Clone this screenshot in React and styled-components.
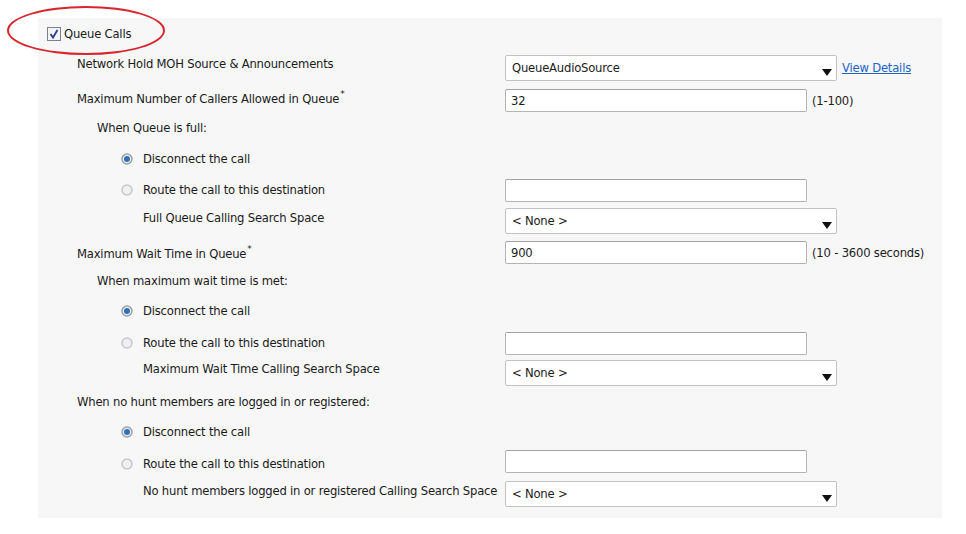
import React from 'react';
import styled, { createGlobalStyle } from 'styled-components';

const GlobalStyle = createGlobalStyle`
  html, body {
    margin: 0;
    padding: 0;
    background: #ffffff;
  }
  body {
    font-family: "DejaVu Sans", Verdana, sans-serif;
    font-size: 11.6px;
    color: #1a1a1a;
  }
`;

const Page = styled.div`
  position: relative;
  width: 966px;
  height: 534px;
  padding: 18px 24px 0 38px;
  box-sizing: border-box;
`;

const Panel = styled.div`
  background: #f7f7f7;
  width: 904px;
  padding-bottom: 12px;
  display: flex;
  flex-direction: column;
`;

const Row = styled.div`
  display: flex;
  align-items: center;
  height: ${p => p.h}px;
`;

const Label = styled.div`
  width: 467px;
  flex-shrink: 0;
  box-sizing: border-box;
  padding-left: ${p => p.indent}px;
  display: flex;
  align-items: center;
  gap: ${p => p.gap ?? 10}px;
  white-space: nowrap;
  margin-bottom: ${p => p.up || 0}px;
  letter-spacing: -0.2px;
`;

const Star = styled.sup`
  font-size: 9px;
  margin-left: 1px;
  position: relative;
  top: -1px;
`;

const Control = styled.div`
  display: flex;
  align-items: center;
  gap: 5px;
  margin-top: ${p => p.down || 0}px;
`;

const TextBox = styled.div`
  width: 302px;
  height: 23px;
  box-sizing: border-box;
  background: #fff;
  border: 1px solid #b4b4b4;
  border-top-color: #a3a3a3;
  border-radius: 2px;
  padding: 0 5px;
  display: flex;
  align-items: center;
  letter-spacing: -0.2px;
`;

const SelectBox = styled.div`
  width: 332px;
  height: 26px;
  box-sizing: border-box;
  background: #fff;
  border: 1px solid #c2c2c2;
  border-radius: 2px;
  padding: 0 4px 0 6px;
  display: flex;
  align-items: center;
  justify-content: space-between;
  letter-spacing: -0.2px;
`;

const Arrow = styled.span`
  align-self: flex-end;
  margin-bottom: 4px;
  width: 0;
  height: 0;
  border-left: 5px solid transparent;
  border-right: 5px solid transparent;
  border-top: 7px solid #111;
`;

const Hint = styled.span`
  letter-spacing: -0.2px;
`;

const Link = styled.a`
  color: #1f63c6;
  text-decoration: underline;
  letter-spacing: -0.2px;
`;

const Ellipse = styled.div`
  position: absolute;
  left: 7px;
  top: 6px;
  width: 158px;
  height: 49px;
  border: 2.5px solid #d7262e;
  border-radius: 50%;
  box-sizing: border-box;
`;

const Check = () => (
  <svg width="14" height="14" viewBox="0 0 14 14">
    <rect x="0.5" y="0.5" width="13" height="13" fill="#f4f4f6" stroke="#7c8189" />
    <path d="M3.5 7 L6 10.5 L10.5 3" fill="none" stroke="#2a3f8f" strokeWidth="1.8" />
  </svg>
);

const Radio = ({ on }) => (
  <svg width="12" height="12" viewBox="0 0 12 12">
    <circle cx="6" cy="6" r="5" fill="#f0f0f0" stroke={on ? '#97a0aa' : '#c4c7cb'} strokeWidth="1.5" />
    {on && <circle cx="6" cy="6" r="3" fill="#2f6fb6" />}
  </svg>
);

const Select = ({ value }) => (
  <SelectBox>
    <span>{value}</span>
    <Arrow />
  </SelectBox>
);

const Choice = ({ on, text, up }) => (
  <Label indent={83} up={up}>
    <Radio on={on} />
    <span>{text}</span>
  </Label>
);

export default function App() {
  return (
    <Page>
      <GlobalStyle />
      <Panel>
        <Row h={32}>
          <Label indent={9} gap={3}>
            <Check />
            <span>Queue Calls</span>
          </Label>
        </Row>
        <Row h={32}>
          <Label indent={39} up={4}>Network Hold MOH Source &amp; Announcements</Label>
          <Control down={4}>
            <Select value="QueueAudioSource" />
            <Link href="#">View Details</Link>
          </Control>
        </Row>
        <Row h={34}>
          <Label indent={39} up={3}>
            <span>Maximum Number of Callers Allowed in Queue<Star>*</Star></span>
          </Label>
          <Control down={3}>
            <TextBox>32</TextBox>
            <Hint>(1-100)</Hint>
          </Control>
        </Row>
        <Row h={24}>
          <Label indent={59}>When Queue is full:</Label>
        </Row>
        <Row h={38}>
          <Choice on text="Disconnect the call" />
        </Row>
        <Row h={24}>
          <Choice text="Route the call to this destination" />
          <Control>
            <TextBox />
          </Control>
        </Row>
        <Row h={34}>
          <Label indent={105} up={3}>Full Queue Calling Search Space</Label>
          <Control down={3}>
            <Select value="< None >" />
          </Control>
        </Row>
        <Row h={33}>
          <Label indent={39}>
            <span>Maximum Wait Time in Queue<Star>*</Star></span>
          </Label>
          <Control>
            <TextBox>900</TextBox>
            <Hint>(10 - 3600 seconds)</Hint>
          </Control>
        </Row>
        <Row h={24}>
          <Label indent={59}>When maximum wait time is met:</Label>
        </Row>
        <Row h={36}>
          <Choice on text="Disconnect the call" />
        </Row>
        <Row h={28}>
          <Choice text="Route the call to this destination" />
          <Control>
            <TextBox />
          </Control>
        </Row>
        <Row h={28}>
          <Label indent={105} up={4}>Maximum Wait Time Calling Search Space</Label>
          <Control down={4}>
            <Select value="< None >" />
          </Control>
        </Row>
        <Row h={34}>
          <Label indent={39}>When no hunt members are logged in or registered:</Label>
        </Row>
        <Row h={26}>
          <Choice on text="Disconnect the call" />
        </Row>
        <Row h={33}>
          <Choice up={-4} text="Route the call to this destination" />
          <Control>
            <TextBox />
          </Control>
        </Row>
        <Row h={28}>
          <Label indent={105} up={3}>No hunt members logged in or registered Calling Search Space</Label>
          <Control down={3}>
            <Select value="< None >" />
          </Control>
        </Row>
      </Panel>
      <Ellipse />
    </Page>
  );
}
